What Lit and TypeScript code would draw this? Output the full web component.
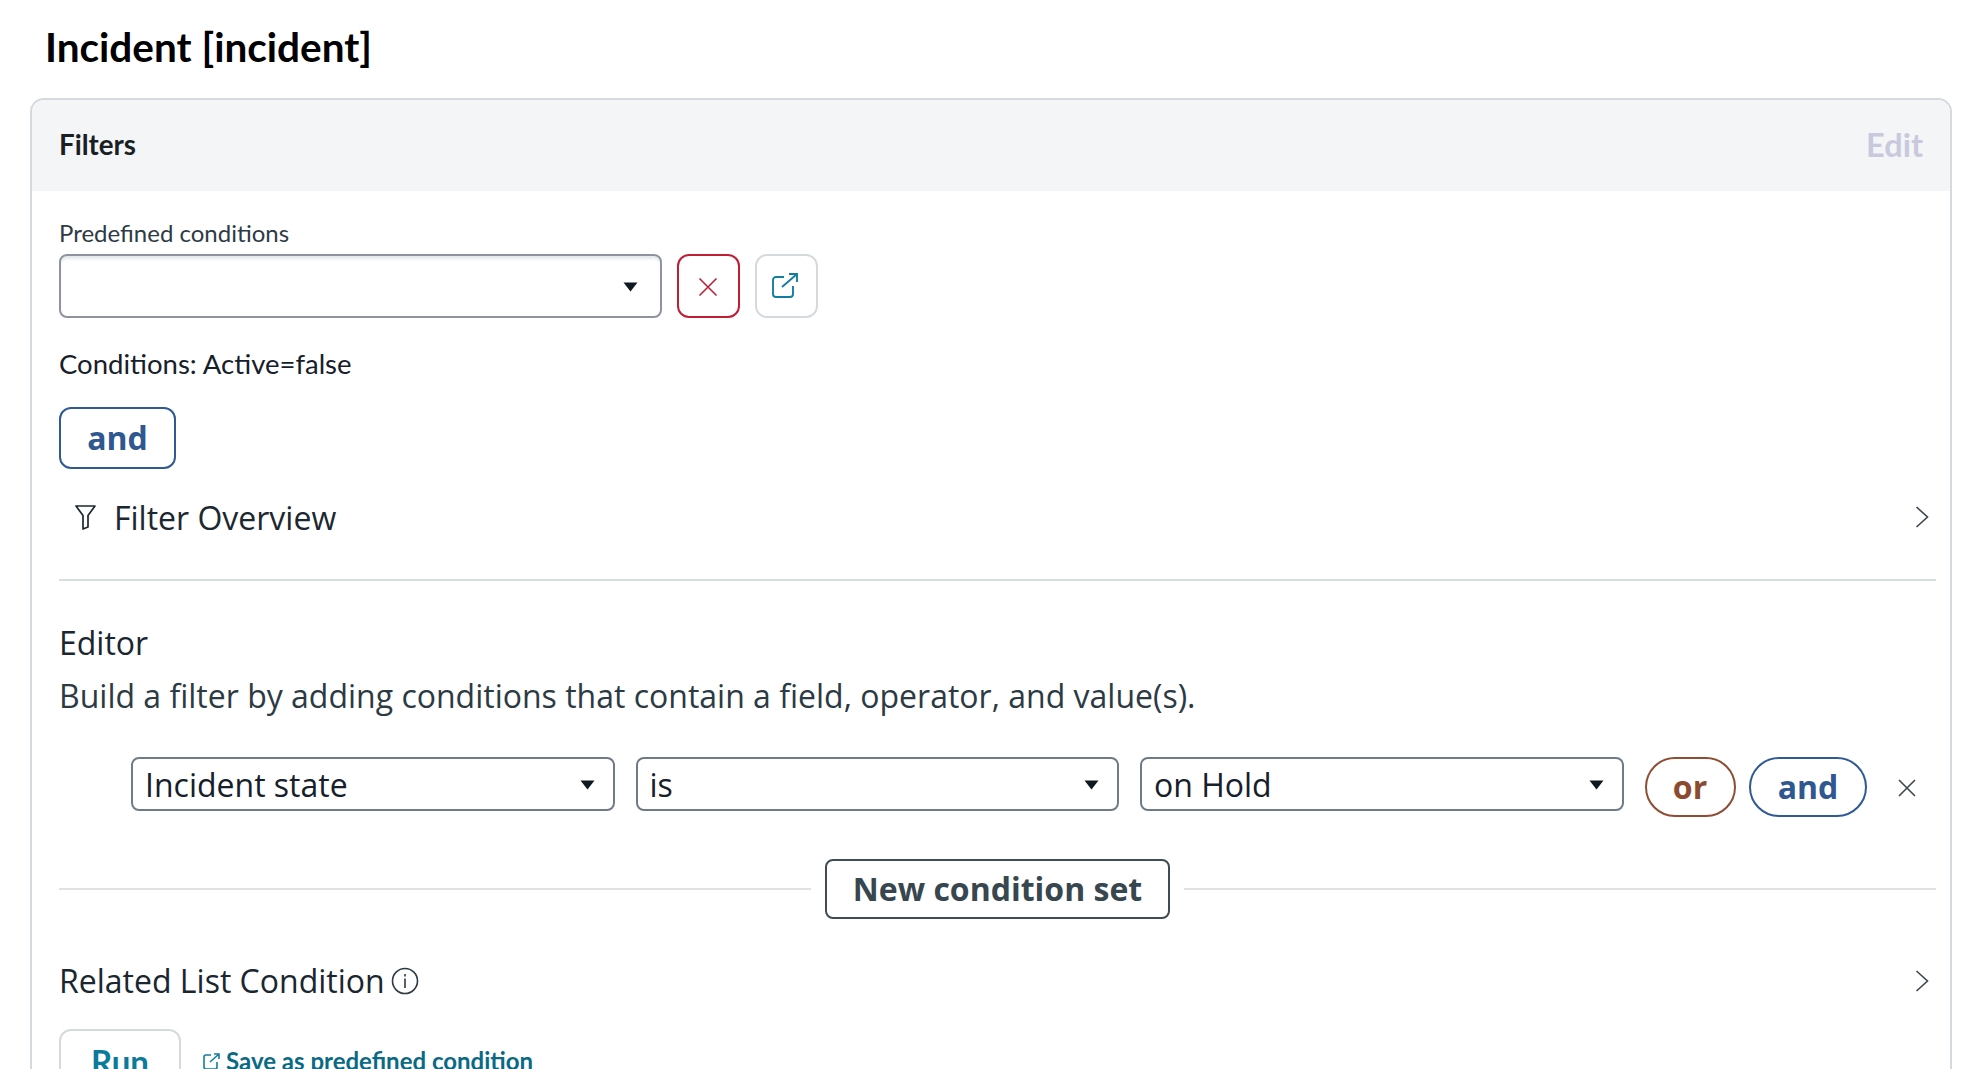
import { LitElement, html, css } from "lit";
import { customElement } from "lit/decorators.js";

const arrow = html`<svg class="arrow" width="15" height="10" viewBox="0 0 15 10"><path d="M0.5 0.5H14.5L7.5 9.5Z" fill="#10181f"/></svg>`;
const chevron = html`<svg class="chev" width="14" height="22" viewBox="0 0 14 22"><path d="M1.5 1L12.5 11L1.5 21" fill="none" stroke="#3a4650" stroke-width="1.6"/></svg>`;

@customElement("app-root")
export class AppRoot extends LitElement {
  static styles = css`
    :host { display: block; height: 1069px; overflow: hidden; background: #fff; font-family: "Open Sans", sans-serif; color: #1c2830; }
    * { box-sizing: border-box; }
    h1 { margin: 0; padding: 24px 0 0 45px; font: 700 40.5px/46px Lato, sans-serif; color: #000; height: 98px; }
    .card { margin-left: 30px; width: 1922px; border: 2px solid #d5d9e0; border-radius: 14px 14px 0 0; border-bottom: none; height: 1100px; overflow: hidden; }
    .head { height: 91px; background: #f4f5f7; display: flex; align-items: center; justify-content: space-between; padding: 0 27px 1px; font: 700 27.7px/36px Lato, sans-serif; color: #1a1f24; }
    .edit { color: #c9c9de; font-size: 32.5px; }
    .body { padding: 28px 14px 0 27px; }
    .label { font: 400 24px/28px Lato, sans-serif; color: #2e3a44; }
    .pre { display: flex; margin-top: 7px; gap: 15px; }
    .sel { display: flex; align-items: center; justify-content: space-between; background: #fff; border: 2px solid #6f7b86; border-radius: 8px; }
    .arrow { margin-top: 2px; }
    .big { width: 602.5px; height: 64px; padding: 0 22px 0 16px; border-color: #8e939f; box-shadow: inset 0 4px 3px -1px #e6e9ec; }
    .sq { width: 63px; height: 64px; padding-top: 1px; border: 2px solid #d5dbdd; border-radius: 12px; display: flex; align-items: center; justify-content: center; background: #fff; }
    .red { border-color: #bf1e35; }
    .cond { font: 400 27.5px/36px Lato, sans-serif; margin-top: 28px; color: #16202a; }
    .btn { display: flex; align-items: center; justify-content: center; background: #fff; font: 700 32px/1 "Open Sans", sans-serif; }
    .and { color: #2f5790; border: 2px solid #2f5a96; }
    .or { color: #8c4a2f; border: 2px solid #8f4d33; }
    .and1 { width: 117px; height: 62px; border-radius: 12px; margin-top: 25px; }
    .ov { height: 48px; margin-top: 24px; margin-bottom: 1px; display: flex; align-items: center; padding-left: 16px; font-size: 32px; justify-content: space-between; padding-right: 7px; }
    .ovl { display: flex; align-items: center; gap: 18px; }
    .rule { height: 2px; background: #d8dfe0; margin-top: 38px; }
    .h2 { font-size: 32px; line-height: 44px; margin-top: 40px; color: #1a2630; }
    .desc { font-size: 32px; line-height: 44px; margin-top: 9px; color: #2c3a44; }
    .row { display: flex; align-items: flex-start; margin-top: 39px; padding-left: 72px; gap: 21px; }
    .row .sel { width: 483.5px; height: 54px; padding: 0 18px 0 12px; font-size: 32px; color: #16202a; }
    .pills { display: flex; gap: 13.5px; }
    .pill { height: 60px; border-radius: 30px; }
    .pill.or { width: 91px; }
    .pill.and { width: 118px; }
    .rm { margin: 22px 0 0 10px; }
    .set { display: flex; align-items: center; margin-top: 42px; gap: 14px; }
    .line { flex: 1; height: 2px; background: #dfe1e2; }
    .newset { width: 345px; height: 60px; border: 2px solid #3f4c55; border-radius: 8px; color: #37474f; }
    .rel { display: flex; justify-content: space-between; align-items: center; font-size: 32px; line-height: 44px; margin-top: 40px; padding-right: 7px; color: #1a2630; }
    .rell { display: flex; align-items: center; gap: 6px; }
    .actions { display: flex; align-items: center; gap: 22px; margin-top: 26px; }
    .run { width: 122px; height: 61px; padding-top: 3px; border: 2px solid #d5dbdd; border-radius: 12px; color: #0b7a9b; font: 700 33px/1 Lato, sans-serif; }
    .save { display: flex; align-items: center; gap: 5px; padding-top: 2px; font: 700 24px/28px Lato, sans-serif; color: #0a6a85; }
  `;

  render() {
    return html`
      <h1>Incident [incident]</h1>
      <section class="card">
        <div class="head"><span>Filters</span><span class="edit">Edit</span></div>
        <div class="body">
          <div class="label">Predefined conditions</div>
          <div class="pre">
            <div class="sel big"><span></span>${arrow}</div>
            <div class="sq red">
              <svg width="20" height="20" viewBox="0 0 20 20"><path d="M1.5 1.5L18.5 18.5M18.5 1.5L1.5 18.5" stroke="#bf1e35" stroke-width="1.6" fill="none"/></svg>
            </div>
            <div class="sq">
              <svg width="30" height="30" viewBox="0 0 30 30" fill="none" stroke="#137f9f" stroke-width="1.9"><path d="M13 5H5a3 3 0 0 0-3 3V22a3 3 0 0 0 3 3H19a3 3 0 0 0 3-3V14"/><path d="M11 15L26 2M18 2H26V10"/></svg>
            </div>
          </div>
          <div class="cond">Conditions: Active=false</div>
          <div class="btn and and1">and</div>
          <div class="ov">
            <div class="ovl">
              <svg width="21" height="25" viewBox="0 0 21 25" fill="none" stroke="#1c2830" stroke-width="1.7" stroke-linejoin="round"><path d="M1 1H20L13 10.5V22L8 24V10.5Z"/></svg>
              <span>Filter Overview</span>
            </div>
            ${chevron}
          </div>
          <div class="rule"></div>
          <div class="h2">Editor</div>
          <div class="desc">Build a filter by adding conditions that contain a field, operator, and value(s).</div>
          <div class="row">
            <div class="sel"><span>Incident state</span>${arrow}</div>
            <div class="sel"><span>is</span>${arrow}</div>
            <div class="sel"><span>on Hold</span>${arrow}</div>
            <div class="pills">
              <div class="btn or pill">or</div>
              <div class="btn and pill">and</div>
            </div>
            <svg class="rm" width="18" height="18" viewBox="0 0 18 18"><path d="M1 1L17 17M17 1L1 17" stroke="#3a4650" stroke-width="1.6" fill="none"/></svg>
          </div>
          <div class="set">
            <div class="line"></div>
            <div class="btn newset">New condition set</div>
            <div class="line"></div>
          </div>
          <div class="rel">
            <div class="rell">
              <span>Related List Condition</span>
              <svg width="28" height="28" viewBox="0 0 28 28" fill="none" stroke="#2c3a44" stroke-width="1.6"><circle cx="14" cy="14" r="12.5"/><path d="M14 11.5V21M14 7V9.5"/></svg>
            </div>
            ${chevron}
          </div>
          <div class="actions">
            <div class="btn run">Run</div>
            <div class="save">
              <svg width="18" height="18" viewBox="0 0 18 18" fill="none" stroke="#137f9f" stroke-width="1.6"><path d="M8 3H3a2 2 0 0 0-2 2V15a2 2 0 0 0 2 2H12a2 2 0 0 0 2-2V10"/><path d="M7 10L16 2M11 2H16V7"/></svg>
              <span>Save as predefined condition</span>
            </div>
          </div>
        </div>
      </section>
    `;
  }
}
